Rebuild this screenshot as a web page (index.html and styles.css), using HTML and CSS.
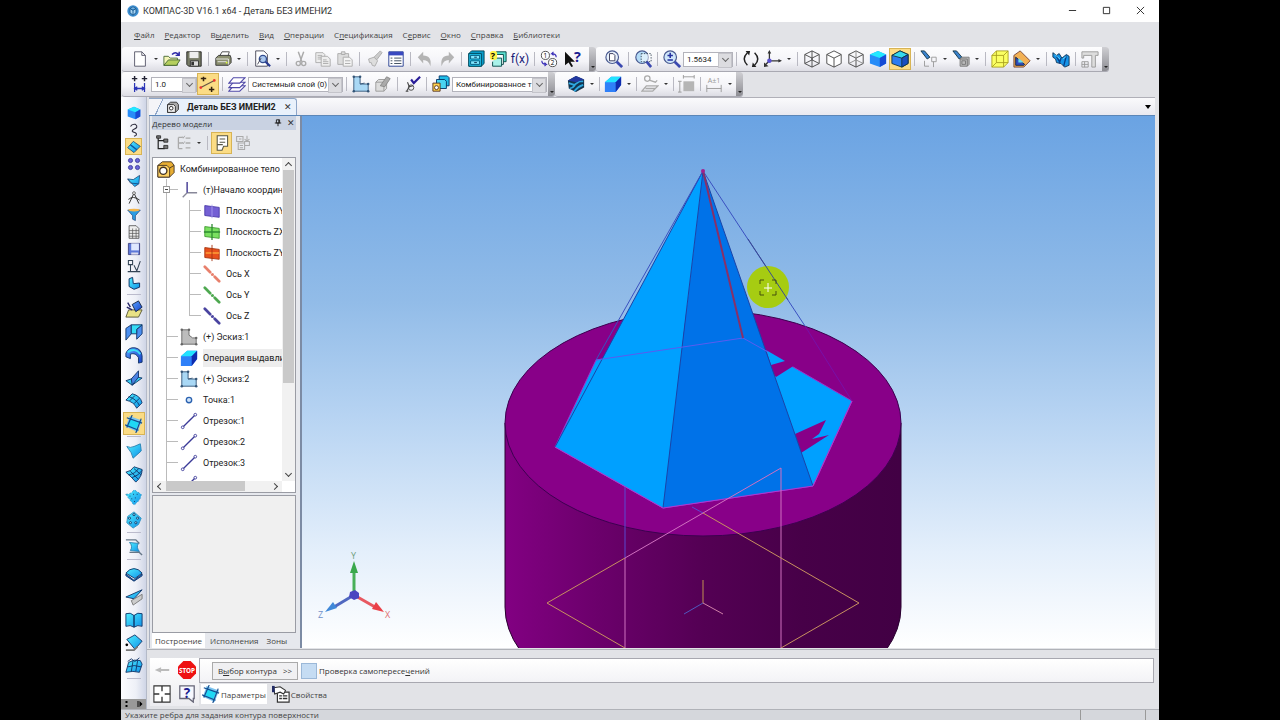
FILE: index.html
```
<!DOCTYPE html>
<html lang="ru">
  <head>
    <meta charset="UTF-8" />
    <meta name="viewport" content="width=device-width, initial-scale=1.0" />
    <title>КОМПАС-3D V16.1 x64 - Деталь БЕЗ ИМЕНИ2</title>
    <link rel="stylesheet" href="styles.css" />
  </head>
  <body>
    <!-- icon set -->
    <svg class="defs" width="0" height="0" aria-hidden="true">
      <defs>
        <linearGradient id="cy" x1="0" y1="0" x2="1" y2="1"><stop offset="0" stop-color="#4ff0ff" /><stop offset="1" stop-color="#0f8fe8" /></linearGradient>
        <linearGradient id="bl" x1="0" y1="0" x2="1" y2="1"><stop offset="0" stop-color="#5ba4ff" /><stop offset="1" stop-color="#1540c8" /></linearGradient>
      </defs>
      <symbol id="logo" viewBox="0 0 20 20"><circle cx="10" cy="10" r="9.500" fill="#3d8ed0" /><path d="M5 6l5-3 5 3v7l-5 4-5-4zM5 6l5 3 5-3M10 9v8" fill="#a8d4f2" stroke="#15578f" stroke-width="1.5" /></symbol>
      <symbol id="new" viewBox="0 0 20 20"><path d="M4 2h8l4 4v12H4z" fill="#fff" stroke="#556" /><path d="M12 2v4h4" fill="none" stroke="#556" /></symbol>
      <symbol id="open" viewBox="0 0 20 20"><path d="M1 17V7h5l2 2h8v8z" fill="#f5f5b8" stroke="#463" /><path d="M1 17l5-6h13l-4 6z" fill="#b5cf5d" stroke="#463" /><path d="M10 5q4-4 7 0M18 2v4h-4" fill="none" stroke="#2e2aa8" stroke-width="1.6" /></symbol>
      <symbol id="save" viewBox="0 0 20 20"><path d="M2 2h16v16H4l-2-2z" fill="#777b66" stroke="#222" /><path d="M5 2h10v7H5z" fill="#eee" /><path d="M6 12h9v6H6z" fill="#ddd" stroke="#333" /><path d="M7 13h3v4H7z" fill="#333" /></symbol>
      <symbol id="print" viewBox="0 0 20 20"><path d="M6 7l3-5h8l-2 6z" fill="#fff" stroke="#444" /><path d="M2 9l3-3h13l1 3v5l-3 3H2z" fill="#8c9070" stroke="#333" /><path d="M2 10h14v6M4 13h10" fill="none" stroke="#eee" /><circle cx="14" cy="14" r="1" fill="#df3" /></symbol>
      <symbol id="preview" viewBox="0 0 20 20"><path d="M3 1h9l4 4v13H3z" fill="#fff" stroke="#445" /><circle cx="11" cy="10" r="4" fill="#a9c7ee" stroke="#334d90" stroke-width="1.5" /><path d="M14 13l5 5" stroke="#283a90" stroke-width="2.5" /><path d="M5 16l4-7" stroke="#445" /></symbol>
      <symbol id="cut" viewBox="0 0 20 20"><path d="M7 2l4 11M13 2L9 13" stroke="#aaa" stroke-width="1.6" /><circle cx="7" cy="15" r="2.3" fill="none" stroke="#aaa" stroke-width="1.5" /><circle cx="13" cy="15" r="2.3" fill="none" stroke="#aaa" stroke-width="1.5" /></symbol>
      <symbol id="copy" viewBox="0 0 20 20"><g fill="#eee" stroke="#aaa"><path d="M2 3h8l2 2v9H2z" /><path d="M8 7h7l3 3v8H8z" /><path d="M4 6h5M4 8h4M4 10h4M10 11h4M10 13h6M10 15h6" /></g></symbol>
      <symbol id="paste" viewBox="0 0 20 20"><g fill="#ddd" stroke="#aaa"><path d="M2 4h12v12H2z" /><path d="M6 2h4v3H6z" /><path d="M8 8h7l3 3v7H8z" fill="#f4f4f4" /><path d="M10 12h6M10 15h6" /></g></symbol>
      <symbol id="brush" viewBox="0 0 20 20"><path d="M17 1l2 2-6 8-3-3z" fill="#ccc" stroke="#aaa" /><path d="M4 10l6-2 4 4-3 6-3-1-1-3-2 0z" fill="#ddd" stroke="#aaa" /></symbol>
      <symbol id="props" viewBox="0 0 20 20"><path d="M2 2h16v16H2z" fill="#fff" stroke="#223b8f" /><path d="M2 2h16v4H2z" fill="#3949c0" /><path d="M4 9h2M4 12h2M4 15h2M8 9h8M8 12h8M8 15h8" stroke="#345" /></symbol>
      <symbol id="undo" viewBox="0 0 20 20"><path d="M2 8l6-6v4q10 0 8 12-2-7-8-7v4z" fill="#b4b4b4" /></symbol>
      <symbol id="redo" viewBox="0 0 20 20"><path d="M18 8l-6-6v4Q2 6 4 18q2-7 8-7v4z" fill="#b4b4b4" /></symbol>
      <symbol id="lib" viewBox="0 0 20 20"><path d="M2 4l3-3h14v14l-3 3H2z" fill="#0a9ac8" stroke="#045" /><path d="M2 4h14v14H2z" fill="#21c8f5" stroke="#045" /><path d="M4 6h10v4H4zM4 12h10v4H4z" fill="#7ee7ff" stroke="#057" /><path d="M8 8h3M8 14h3" stroke="#024" /></symbol>
      <symbol id="vars" viewBox="0 0 20 20"><path d="M8 2h11v11H8z" fill="#5de0d0" stroke="#044" /><path d="M6 5h10v11H6z" fill="#fff" stroke="#044" /><path d="M8 9h6v9H4v-5" fill="#a9f2ea" stroke="#044" /><rect x="1" y="1" width="8" height="10" rx="3" fill="#fff34a" /></symbol>
      <symbol id="order" viewBox="0 0 20 20"><circle cx="6" cy="6" r="4.5" fill="#fff" stroke="#444" /><circle cx="14" cy="14" r="4.5" fill="#fff" stroke="#444" /><path d="M18 8q0-4-5-4l2-2M13 4l2 2M2 12q0 4 5 4l-2-2M7 16l-2 2" fill="none" stroke="#3b30b8" stroke-width="1.3" /></symbol>
      <symbol id="help" viewBox="0 0 20 20"><path d="M0 2v15l4-3 3 5 2-1-3-5h5z" fill="#111" /></symbol>
      <symbol id="zoompage" viewBox="0 0 20 20"><circle cx="8" cy="8" r="7" fill="#e8f1fb" stroke="#4a5a90" stroke-width="1.3" /><path d="M5 4h4l2 2v6H5z" fill="#fff" stroke="#335" /><path d="M13 13l6 6" stroke="#3b49b0" stroke-width="3" /></symbol>
      <symbol id="zoomsel" viewBox="0 0 20 20"><circle cx="9" cy="8" r="7" fill="#b5dcf7" stroke="#4a5a90" stroke-width="1.3" /><path d="M8 4h11v9H8z" fill="#ffffff88" stroke="#345" stroke-dasharray="1.5" /><path d="M14 13l5 6" stroke="#3b49b0" stroke-width="3" /></symbol>
      <symbol id="zoompm" viewBox="0 0 20 20"><circle cx="8" cy="8" r="7" fill="#cfe6fa" stroke="#4a5a90" stroke-width="1.3" /><path d="M8 3v6M5 6h6M5 11h6" stroke="#2530a0" stroke-width="1.7" /><path d="M13 13l6 6" stroke="#3b49b0" stroke-width="3" /></symbol>
      <symbol id="rotate" viewBox="0 0 20 20"><path d="M6 17Q-1 10 6 3M14 3q7 7 0 14" fill="none" stroke="#222" stroke-width="1.6" /><path d="M4 1h5l-1 5zM16 19h-5l1-5z" fill="#222" /></symbol>
      <symbol id="axes" viewBox="0 0 20 20"><path d="M6 12V2M6 12h12M6 12l-5 5" stroke="#333" stroke-width="1.4" /><path d="M4 4l2-4 2 4zM16 10l4 2-4 2zM0 14v5l5-1z" fill="#333" /><circle cx="6" cy="12" r="2.5" fill="#5a50d0" /></symbol>
      <symbol id="wire" viewBox="0 0 20 20"><path d="M10 1l8 4v10l-8 4-8-4V5zM2 5l8 4 8-4M10 9v10M10 1v10M2 15l8-4 8 4" fill="none" stroke="#444" /></symbol>
      <symbol id="hidden" viewBox="0 0 20 20"><path d="M10 1l8 4v10l-8 4-8-4V5z" fill="#fff" stroke="#444" /><path d="M2 5l8 4 8-4M10 9v10" fill="none" stroke="#444" /></symbol>
      <symbol id="thin" viewBox="0 0 20 20"><path d="M10 1l8 4v10l-8 4-8-4V5zM2 5l8 4 8-4M10 9v10" fill="none" stroke="#444" /><path d="M10 1v10M2 15l8-4 8 4" fill="none" stroke="#888" /></symbol>
      <symbol id="shade" viewBox="0 0 20 20"><path d="M1 5l9-4 9 4v10l-7 4-11-4z" fill="#278cf8" /><path d="M1 5l9-4 9 4-7 4z" fill="#23e8ff" /><path d="M12 9l7-4v10l-7 4z" fill="#174bd4" /></symbol>
      <symbol id="shadewire" viewBox="0 0 20 20"><path d="M1 6l9-5 9 4v10l-7 4-11-4z" fill="#2b7cf0" stroke="#134" /><path d="M1 6l9-5 9 4-7 4z" fill="#35d8ee" stroke="#134" /><path d="M12 9l7-4v10l-7 4z" fill="#1a4ec0" stroke="#134" /></symbol>
      <symbol id="light" viewBox="0 0 20 20"><path d="M1 1l4 0 6 7-3 2z" fill="#3a83cf" stroke="#134" /><path d="M5 12v6h5M13 8h5v5h-5zM15 13v6" fill="none" stroke="#999" /></symbol>
      <symbol id="light2" viewBox="0 0 20 20"><path d="M1 1l4 0 6 7-3 2z" fill="#3a83cf" stroke="#134" /><path d="M9 10l2-2h8v8l-2 2H9z" fill="#bbb" stroke="#777" /><path d="M9 10h8v8M11 12h4v4h-4z" fill="none" stroke="#777" /></symbol>
      <symbol id="ybox" viewBox="0 0 20 20"><path d="M1 6l5-5h13v13l-5 5H1z" fill="#fbff62" stroke="#a9a020" /><path d="M1 6h13v13M14 6l5-5M6 1v13h13M6 14l-5 5" fill="none" stroke="#a9a020" /></symbol>
      <symbol id="section" viewBox="0 0 20 20"><path d="M1 6L8 1l11 11-7 7H1z" fill="#f2b155" stroke="#743" /><path d="M3 17V8l10 8-1 1z" fill="#2e4fc0" stroke="#124" /><path d="M6 14V9l6 5z" fill="#6fe0e8" /></symbol>
      <symbol id="fish" viewBox="0 0 20 20"><path d="M1 3l4 3 3-2 3 5 5-4 3 2v10l-5 2-4-4-5-1-1-4-3-2z" fill="#1594e8" stroke="#135" /><path d="M5 7l4 7M10 9l-2 6M16 6l-3 12" stroke="#073f88" stroke-width="1.5" /><path d="M3 5l6 5M12 10l4-3" stroke="#62d8ff" /></symbol>
      <symbol id="caliper" viewBox="0 0 20 20"><path d="M1 2h18v4h-3v13h-4V6H3v3H1z" fill="#ddd" stroke="#999" /><path d="M1 13h7v6H1zM4 13v6M1 16h7" fill="none" stroke="#999" /></symbol>
      <symbol id="dims" viewBox="0 0 20 20"><path d="M4 1v6M1 4h6M15 1v6M12 4h6" stroke="#223" stroke-width="1.6" /><path d="M4 9v10M15 9v10M5 15h9M7 13l-3 2 3 2M12 13l3 2-3 2" fill="none" stroke="#2b35b8" stroke-width="1.4" /></symbol>
      <symbol id="snap" viewBox="0 0 20 20"><path d="M2 14L17 6" stroke="#654" stroke-width="1.3" /><path d="M5 2v5M2 4h6M14 13v6M11 16h6" stroke="#321" stroke-width="1.7" /><circle cx="2" cy="14" r="1.5" fill="#e33" /><circle cx="17" cy="6" r="1.5" fill="#e33" /></symbol>
      <symbol id="layers" viewBox="0 0 20 20"><g fill="#fff" stroke="#5049a8" stroke-width="1.2"><path d="M1 18l5-6h13l-6 6z" /><path d="M1 14l5-6h13l-6 6z" /><path d="M1 9l5-6h13l-6 6z" /></g></symbol>
      <symbol id="sketch" viewBox="0 0 20 20"><path d="M2 2h7v8h9v8H2z" fill="#a9d8f5" stroke="#357" /><path d="M9 10l5-1" stroke="#357" /><g fill="#357"><circle cx="2" cy="2" r="1.4" /><circle cx="9" cy="2" r="1.4" /><circle cx="18" cy="10" r="1.4" /><circle cx="18" cy="18" r="1.4" /><circle cx="2" cy="18" r="1.4" /></g></symbol>
      <symbol id="sketchg" viewBox="0 0 20 20"><path d="M2 2h8v6l4 3h4v7H2z" fill="#bdbdbd" stroke="#666" /><g fill="#666"><circle cx="2" cy="2" r="1.4" /><circle cx="10" cy="2" r="1.4" /><circle cx="18" cy="11" r="1.4" /><circle cx="18" cy="18" r="1.4" /><circle cx="2" cy="18" r="1.4" /></g></symbol>
      <symbol id="editpart" viewBox="0 0 20 20"><path d="M2 8l3-3h9v10l-3 3H2z" fill="#ddd" stroke="#999" /><path d="M2 8h9v10" fill="none" stroke="#999" /><path d="M7 12l7-10 4 2-6 9z" fill="#aaa" stroke="#888" /></symbol>
      <symbol id="check" viewBox="0 0 20 20"><path d="M4 18l3-5 4-1M7 13l-2-5M3 18h3" fill="none" stroke="#444" stroke-width="1.2" /><circle cx="9" cy="14" r="3" fill="none" stroke="#444" /><path d="M9 5l3 4 7-7" fill="none" stroke="#281c98" stroke-width="2.4" /></symbol>
      <symbol id="combo" viewBox="0 0 20 20"><path d="M8 1h9l2 2v9H8z" fill="#20bde8" stroke="#036" /><path d="M5 5h9l2 2v8H5z" fill="#49d4f2" stroke="#036" /><path d="M1 9h8v9H1z" fill="#ffd34a" stroke="#532" /><circle cx="5" cy="14" r="2.2" fill="#fff" stroke="#532" /></symbol>
      <symbol id="stripes" viewBox="0 0 20 20"><path d="M1 6l9-5 9 4v9l-9 5-8-4z" fill="#13354f" /><path d="M2 9l6 2 6-4h4M3 15q4-1 6-4M8 18q4-5 10-7" fill="none" stroke="#2fa8e0" stroke-width="2" /><path d="M1 6l9-5 9 4-9 3z" fill="#2238a0" /></symbol>
      <symbol id="extrude" viewBox="0 0 20 20"><path d="M1 8l7-6h11v9l-6 8H1z" fill="#2f80f8" /><path d="M1 8l7-6h11l-6 6z" fill="#22e3ff" /><path d="M13 8l6-6v9l-6 8z" fill="#0f2cae" /></symbol>
      <symbol id="proj" viewBox="0 0 20 20"><g fill="none" stroke="#aaa" stroke-width="1.4"><circle cx="7" cy="4" r="3" /><path d="M10 6l6 2 2-2M1 18l5-6h13l-6 6zM5 15h11" /></g></symbol>
      <symbol id="dimbox" viewBox="0 0 20 20"><path d="M6 7h12v11H6z" fill="#b5b5b5" /><path d="M2 7v12M0 7h4M0 19h4M6 2h12M6 0v4M18 0v4" stroke="#999" /></symbol>
      <symbol id="dimtext" viewBox="0 0 20 20"><path d="M2 11v8M18 11v8M2 15h16" stroke="#999" /></symbol>
      <symbol id="curve" viewBox="0 0 20 20"><path d="M5 5q2-4 7-3 5 4-2 7-6 3 2 5 4 3-2 5" fill="none" stroke="#334" stroke-width="1.6" /></symbol>
      <symbol id="surf" viewBox="0 0 20 20"><path d="M1 11L9 2l10 7-9 9z" fill="url(#cy)" stroke="#136" /><path d="M5 7l9 7" stroke="#0b55a0" stroke-width="2" /></symbol>
      <symbol id="array" viewBox="0 0 20 20"><g fill="#6c66d8" stroke="#228"><circle cx="5" cy="5" r="3" /><circle cx="15" cy="5" r="3" /><circle cx="5" cy="15" r="3" /><circle cx="15" cy="15" r="3" /></g></symbol>
      <symbol id="fold" viewBox="0 0 20 20"><path d="M1 7l8 1 9-6-1 12-6 4z" fill="url(#cy)" stroke="#136" /><path d="M1 7l4 6 11 1" fill="none" stroke="#136" /></symbol>
      <symbol id="compass" viewBox="0 0 20 20"><path d="M10 3L3 18M10 3l7 15M2 12q7-6 16 1" fill="none" stroke="#333" stroke-width="1.4" /><circle cx="10" cy="3" r="2" fill="#fff" stroke="#333" /></symbol>
      <symbol id="filter" viewBox="0 0 20 20"><path d="M1 3h18l-7 8v7l-4-2v-5z" fill="#2b9de4" stroke="#247" /><ellipse cx="10" cy="3" rx="8" ry="2" fill="#f2b44c" /></symbol>
      <symbol id="spec" viewBox="0 0 20 20"><path d="M3 1h10l4 4v14H3z" fill="#eee" stroke="#333" /><path d="M3 8h14M3 12h14M3 16h14M8 5v14M13 5v14" stroke="#555" /></symbol>
      <symbol id="report" viewBox="0 0 20 20"><path d="M2 2h16v16H2z" fill="#5d78d8" stroke="#226" /><path d="M6 2h11v10H6z" fill="#dfe8ff" /><path d="M6 15h10v3H6z" fill="#dde" /></symbol>
      <symbol id="elem" viewBox="0 0 20 20"><path d="M2 2h6v6H2zM5 8v10M1 18h18M10 9l4 8 5-14" fill="none" stroke="#345" stroke-width="1.5" /></symbol>
      <symbol id="sheet" viewBox="0 0 20 20"><path d="M3 4l5-2 1 9 9-1v6l-8 3-7-4z" fill="url(#cy)" stroke="#136" stroke-width="1.4" /></symbol>
      <symbol id="sk3d" viewBox="0 0 20 20"><path d="M1 19l3-8h15l-4 8z" fill="#e8e285" stroke="#553" /><path d="M8 5l7-4 4 7-7 5z" fill="url(#bl)" stroke="#124" /><path d="M2 8l6 3M3 3l3 5" stroke="#226" stroke-width="1.5" /></symbol>
      <symbol id="s-ext" viewBox="0 0 20 20"><path d="M1 6l6-4v10l-6 7zM13 7l6-5v10l-6 6z" fill="#4b8ff0" stroke="#136" /><path d="M7 2h12l-6 5v5H7z" fill="#35dcf5" stroke="#136" /></symbol>
      <symbol id="s-rev" viewBox="0 0 20 20"><path d="M1 8Q4 1 11 2q7 1 8 9v7l-4 1v-6q-3-6-9-4v5l-5-2z" fill="url(#bl)" stroke="#136" /><path d="M3 7q8-6 14 2" fill="none" stroke="#3be0f5" stroke-width="2" /></symbol>
      <symbol id="s-bend" viewBox="0 0 20 20"><path d="M1 13l12-4 6 1-11 8z" fill="#38cdf2" stroke="#136" /><path d="M7 11l8-9v7l-7 9z" fill="#4a80e2" stroke="#136" /></symbol>
      <symbol id="s-sweep" viewBox="0 0 20 20"><path d="M1 9l7-7q9 2 11 10l-6 6q-3-7-12-9z" fill="url(#cy)" stroke="#136" /><path d="M4 5q9 3 12 10M5 10l6-6M10 13l6-6" fill="none" stroke="#136" /></symbol>
      <symbol id="s-net" viewBox="0 0 20 20"><path d="M5 1l14 5-5 13L1 13z" fill="#7cc4f0" /><path d="M6 4l10 4-4 8-9-4z" fill="#1fd8f5" /><path d="M8 0L2 14M18 4l-6 16M2 3l17 6M0 11l15 6" stroke="#134d90" stroke-width="1.300" /></symbol>
      <symbol id="s-a" viewBox="0 0 20 20"><path d="M2 5q4 2 8 0l7-3q1 6 1 8l-9 8q-1-6-7-13z" fill="url(#cy)" stroke="#2980b0" /></symbol>
      <symbol id="s-b" viewBox="0 0 20 20"><path d="M1 8q6-1 9-6l9 3q0 8-7 14-5-6-11-11z" fill="url(#cy)" stroke="#136" /><path d="M4 11q7-1 11-7M8 14q7-2 11-8M6 7l9 9M10 4l8 7" fill="none" stroke="#136" /></symbol>
      <symbol id="s-c" viewBox="0 0 20 20"><path d="M1 7q6 0 9-5l8 5q0 6-8 12-5-6-9-12z" fill="url(#cy)" stroke="#3191c0" stroke-dasharray="2" /><path d="M5 9h1M9 7h1M13 7h1M7 12h1M11 11h1M10 15h1" stroke="#136" /></symbol>
      <symbol id="s-d" viewBox="0 0 20 20"><path d="M10 1l8 7-3 7-6 4-7-6 1-7z" fill="url(#cy)" stroke="#3191c0" /><g fill="#9ef" stroke="#136"><circle cx="10" cy="4" r="1.200" /><circle cx="5" cy="8" r="1.200" /><circle cx="14" cy="8" r="1.200" /><circle cx="6" cy="13" r="1.200" /><circle cx="12" cy="13" r="1.200" /></g></symbol>
      <symbol id="s-ruled" viewBox="0 0 20 20"><path d="M5 5l10 1q-3 4 1 9l-10-1q3-5-1-9z" fill="url(#cy)" stroke="#2980b0" /><path d="M1 2h11l4 4M5 16h11l3 3" fill="none" stroke="#678" stroke-width="1.5" /></symbol>
      <symbol id="s-off" viewBox="0 0 20 20"><path d="M1 10l9 7 9-7v2l-9 6-9-6z" fill="#1c75d0" stroke="#136" /><path d="M1 9q4-5 9-5t9 5l-8 6z" fill="url(#cy)" stroke="#136" /></symbol>
      <symbol id="s-trim" viewBox="0 0 20 20"><path d="M1 10L19 2l-9 10z" fill="url(#cy)" stroke="#136" /><path d="M7 14L19 7v5l-10 7z" fill="#ccc" stroke="#777" /></symbol>
      <symbol id="s-sew" viewBox="0 0 20 20"><path d="M1 3q5-2 9 2v13q-4-3-9-1zM10 5q4-4 9-2v14q-5-2-9 1z" fill="url(#cy)" stroke="#136" /></symbol>
      <symbol id="s-rest" viewBox="0 0 20 20"><path d="M2 6l9-5 8 7-8 9z" fill="url(#cy)" stroke="#136" /><path d="M1 18h9l4-4" stroke="#777" stroke-width="2" fill="none" /><circle cx="2" cy="12" r="1.5" /></symbol>
      <symbol id="s-fit" viewBox="0 0 20 20"><path d="M1 17L4 6q6-4 13-2l2 4-3 9q-7-2-15 0z" fill="url(#cy)" stroke="#136" /><path d="M3 11q7-3 15 0M9 4L7 16M14 4l-2 12M3 5l4-3 4 3 5-4" fill="none" stroke="#136" /></symbol>
      <symbol id="tree" viewBox="0 0 20 20"><path d="M4 1v16h8M4 7h8" fill="none" stroke="#222" stroke-width="1.5" /><path d="M2 1h5v3H2zM11 5h5v4h-5zM11 13h5v4h-5z" fill="#777" stroke="#222" /></symbol>
      <symbol id="listg" viewBox="0 0 20 20"><path d="M3 3v14M3 3h5M3 10h5M3 17h5M12 4h6M12 10h6M12 16h6" stroke="#aaa" stroke-width="1.6" /><path d="M8 2l1 2 2-3M8 9l1 2 2-3" fill="none" stroke="#999" /></symbol>
      <symbol id="doc" viewBox="0 0 20 20"><path d="M4 1h13v13h-5l-2 5H4z" fill="#fff" stroke="#554" stroke-width="1.3" /><path d="M7 5h7M7 9h7M4 12h7" stroke="#554" stroke-width="1.4" /></symbol>
      <symbol id="relg" viewBox="0 0 20 20"><path d="M2 2h8v6H2zM4 10h8v8H4zM12 8h6v5h-6zM15 1v6M12 5l3 3 3-3M5 5h3M6 13h4M6 16h4" fill="none" stroke="#aaa" stroke-width="1.3" /></symbol>
      <symbol id="part" viewBox="0 0 20 20"><path d="M1 6l5-4h10l3 4v8l-5 5H1z" fill="#e8ae33" stroke="#432" /><path d="M1 6h10l3 3v10H1z" fill="#ffd263" stroke="#432" /><circle cx="7" cy="12" r="4" fill="#fff" stroke="#432" stroke-width="1.5" /><path d="M14 9l5-3" stroke="#432" /></symbol>
      <symbol id="partg" viewBox="0 0 20 20"><path d="M1 6l5-4h10l3 4v8l-5 5H1z" fill="#aaa" stroke="#222" stroke-width="1.4" /><path d="M1 6h10l3 3v10H1z" fill="#eee" stroke="#222" stroke-width="1.4" /><circle cx="7" cy="12" r="3" fill="#fff" stroke="#222" stroke-width="1.5" /></symbol>
      <symbol id="origin" viewBox="0 0 20 20"><path d="M8 1v12l-5 5M8 13h11" fill="none" stroke="#889" stroke-width="1.5" /><path d="M8 1v12" stroke="#5a50a8" stroke-width="1.5" /></symbol>
      <symbol id="plxy" viewBox="0 0 20 20"><path d="M2 4l16 2v11L2 15z" fill="#7460d4" stroke="#4a3aa8" /><path d="M10 3v15" stroke="#a79bf0" /></symbol>
      <symbol id="plzx" viewBox="0 0 20 20"><path d="M2 4l16 2v11L2 15z" fill="#7ae060" stroke="#3f9a30" /><path d="M10 1v18M1 10h18" stroke="#2c8a30" stroke-width="1.4" /></symbol>
      <symbol id="plzy" viewBox="0 0 20 20"><path d="M2 4l16 2v11L2 15z" fill="#e8501c" stroke="#a53410" /><path d="M3 10h15" stroke="#ffa43a" stroke-width="1.6" /><path d="M10 1v18" stroke="#a53410" /></symbol>
      <symbol id="axis" viewBox="0 0 20 20"><path d="M2 2l6 6M13 13l5 5" stroke="currentColor" stroke-width="3" stroke-linecap="round" /><circle cx="10.500" cy="10.500" r="1.700" fill="currentColor" /></symbol>
      <symbol id="point" viewBox="0 0 20 20"><circle cx="10" cy="10" r="3" fill="#cfe4fa" stroke="#2b62b0" stroke-width="1.5" /></symbol>
      <symbol id="seg" viewBox="0 0 20 20"><path d="M3 17L17 3" stroke="#3b3a98" stroke-width="1.5" /><circle cx="3" cy="17" r="1.5" fill="#fff" stroke="#3b3a98" /><circle cx="17" cy="3" r="1.500" fill="#fff" stroke="#3b3a98" /></symbol>
      <symbol id="pin" viewBox="0 0 10 10"><path d="M3 1h4v4H3zM1 5h8M5 5v4M6 1v4" fill="none" stroke="#222" stroke-width="1.200" /></symbol>
      <symbol id="left" viewBox="0 0 20 20"><path d="M2 10l7-3v2h9v2H9v2z" fill="#bbb" /></symbol>
      <symbol id="stop" viewBox="0 0 20 20"><path d="M6 0h8l6 6v8l-6 6H6l-6-6V6z" fill="#ee1212" /></symbol>
      <symbol id="frame" viewBox="0 0 20 20"><path d="M1 1h18v18H1z" fill="#fff" stroke="#333" stroke-width="1.200" /><path d="M10 1v6M10 13v6M1 10h6M13 10h6" stroke="#333" stroke-width="1.500" /></symbol>
      <symbol id="what" viewBox="0 0 20 20"><path d="M2 1h16v14h-1v4l-5-4H2z" fill="#f6f8ff" stroke="#667" stroke-width="1.400" /></symbol>
      <symbol id="hand" viewBox="0 0 20 20"><path d="M6 8h13v11H6z" fill="#fff" stroke="#333" stroke-width="1.300" /><path d="M8 12h3M8 15h3M12 12h5M12 15h5" stroke="#333" stroke-width="1.400" /><path d="M2 3l7-1 6 4-2 4-4-2-6 2z" fill="#fff" stroke="#333" stroke-width="1.200" /><path d="M0 1h3v7H0z" fill="#222c66" /></symbol>
    </svg>

    <div class="app">
      <header class="titlebar">
        <svg class="logo"><use href="#logo" /></svg>
        <h1>КОМПАС-3D V16.1 x64 - Деталь БЕЗ ИМЕНИ2</h1>
        <div class="win-btns">
          <button aria-label="Свернуть"><svg viewBox="0 0 10 10"><path d="M1 5h8" stroke="#222" /></svg></button>
          <button aria-label="Развернуть"><svg viewBox="0 0 10 10"><path d="M1.500 1.500h7v7h-7z" fill="none" stroke="#222" /></svg></button>
          <button aria-label="Закрыть"><svg viewBox="0 0 10 10"><path d="M1 1l8 8M9 1l-8 8" stroke="#222" /></svg></button>
        </div>
      </header>

      <nav class="menu">
        <a href="#"><u>Ф</u>айл</a>
        <a href="#"><u>Р</u>едактор</a>
        <a href="#">В<u>ы</u>делить</a>
        <a href="#"><u>В</u>ид</a>
        <a href="#"><u>О</u>перации</a>
        <a href="#">С<u>п</u>ецификация</a>
        <a href="#">С<u>е</u>рвис</a>
        <a href="#"><u>О</u>кно</a>
        <a href="#"><u>С</u>правка</a>
        <a href="#"><u>Б</u>иблиотеки</a>
      </nav>

      <div class="toolrow">
        <div class="toolbar">
          <button class="tb" aria-label="Создать"><svg><use href="#new" /></svg></button><button class="caret" aria-label="Ещё"></button>
          <button class="tb" aria-label="Открыть"><svg><use href="#open" /></svg></button>
          <button class="tb" aria-label="Сохранить"><svg><use href="#save" /></svg></button>
          <i class="sep"></i>
          <button class="tb" aria-label="Печать"><svg><use href="#print" /></svg></button><button class="caret" aria-label="Ещё"></button>
          <i class="sep"></i>
          <button class="tb" aria-label="Просмотр"><svg><use href="#preview" /></svg></button><button class="caret" aria-label="Ещё"></button>
          <i class="sep"></i>
          <button class="tb" aria-label="Вырезать"><svg><use href="#cut" /></svg></button>
          <button class="tb" aria-label="Копировать"><svg><use href="#copy" /></svg></button>
          <button class="tb" aria-label="Вставить"><svg><use href="#paste" /></svg></button>
          <i class="sep"></i>
          <button class="tb" aria-label="Копировать свойства"><svg><use href="#brush" /></svg></button>
          <button class="tb" aria-label="Свойства"><svg><use href="#props" /></svg></button>
          <i class="sep"></i>
          <button class="tb" aria-label="Отменить"><svg><use href="#undo" /></svg></button>
          <button class="tb" aria-label="Повторить"><svg><use href="#redo" /></svg></button>
          <i class="sep"></i>
          <button class="tb" aria-label="Менеджер библиотек"><svg><use href="#lib" /></svg></button>
          <button class="tb" aria-label="Менеджер документа"><svg viewBox="0 0 20 20"><use href="#vars" /><text x="2" y="10" class="t-q">?</text></svg></button>
          <button class="tb fx" aria-label="Переменные">f(x)</button>
          <i class="sep"></i>
          <button class="tb" aria-label="Порядок"><svg viewBox="0 0 20 20"><use href="#order" /><text x="4" y="9" class="t-n">1</text><text x="12" y="17" class="t-n">2</text></svg></button>
          <button class="tb wide" aria-label="Что это такое?"><svg viewBox="0 0 20 20"><use href="#help" /><text x="10" y="13" class="t-help">?</text></svg></button>
          <i class="grip"></i>
        </div>
        <div class="toolbar">
          <button class="tb" aria-label="Показать все"><svg><use href="#zoompage" /></svg></button>
          <i class="sep"></i>
          <button class="tb" aria-label="Увеличить рамкой"><svg><use href="#zoomsel" /></svg></button>
          <i class="sep"></i>
          <button class="tb" aria-label="Масштаб"><svg><use href="#zoompm" /></svg></button>
          <span class="combo small"><select aria-label="Текущий масштаб"><option>1.5634</option></select></span>
          <i class="sep"></i>
          <button class="tb" aria-label="Повернуть"><svg><use href="#rotate" /></svg></button>
          <button class="tb" aria-label="Ориентация"><svg><use href="#axes" /></svg></button><button class="caret" aria-label="Ещё"></button>
          <i class="sep"></i>
          <button class="tb" aria-label="Каркас"><svg><use href="#wire" /></svg></button>
          <button class="tb" aria-label="Без невидимых линий"><svg><use href="#hidden" /></svg></button>
          <button class="tb" aria-label="Невидимые линии тонкие"><svg><use href="#thin" /></svg></button>
          <button class="tb" aria-label="Полутоновое"><svg><use href="#shade" /></svg></button>
          <button class="tb on" aria-label="Полутоновое с каркасом"><svg><use href="#shadewire" /></svg></button>
          <i class="sep"></i>
          <button class="tb" aria-label="Скрыть"><svg><use href="#light" /></svg></button><button class="caret" aria-label="Ещё"></button>
          <button class="tb" aria-label="Скрыть тела"><svg><use href="#light2" /></svg></button><button class="caret" aria-label="Ещё"></button>
          <i class="sep"></i>
          <button class="tb" aria-label="Габарит"><svg><use href="#ybox" /></svg></button>
          <button class="tb" aria-label="Сечение"><svg><use href="#section" /></svg></button><button class="caret" aria-label="Ещё"></button>
          <i class="sep"></i>
          <button class="tb" aria-label="Перестроить"><svg><use href="#fish" /></svg></button>
          <i class="sep"></i>
          <button class="tb" aria-label="Измерить"><svg><use href="#caliper" /></svg></button>
          <i class="grip"></i>
        </div>
      </div>

      <div class="toolrow">
        <div class="toolbar">
          <button class="tb" aria-label="Шаг курсора"><svg><use href="#dims" /></svg></button>
          <span class="combo step"><select aria-label="Шаг"><option>1.0</option></select></span>
          <button class="tb on" aria-label="Привязки"><svg><use href="#snap" /></svg></button>
          <i class="sep"></i>
          <button class="tb" aria-label="Слои"><svg><use href="#layers" /></svg></button>
          <span class="combo"><select aria-label="Слой"><option>Системный слой (0)</option></select></span>
          <i class="sep"></i>
          <button class="tb" aria-label="Эскиз"><svg><use href="#sketch" /></svg></button>
          <button class="tb" aria-label="Редактировать деталь"><svg><use href="#editpart" /></svg></button>
          <i class="sep"></i>
          <button class="tb" aria-label="Проверка"><svg><use href="#check" /></svg></button>
          <i class="sep"></i>
          <button class="tb" aria-label="Исполнение"><svg><use href="#combo" /></svg></button>
          <span class="combo"><select aria-label="Исполнение"><option>Комбинированное т</option></select></span>
          <i class="grip"></i>
        </div>
        <div class="toolbar second">
          <button class="tb" aria-label="Зебра"><svg><use href="#stripes" /></svg></button><button class="caret" aria-label="Ещё"></button>
          <i class="sep"></i>
          <button class="tb" aria-label="Выдавливание"><svg><use href="#extrude" /></svg></button><button class="caret" aria-label="Ещё"></button>
          <i class="sep"></i>
          <button class="tb" aria-label="Проекция"><svg><use href="#proj" /></svg></button><button class="caret" aria-label="Ещё"></button>
          <i class="sep"></i>
          <button class="tb" aria-label="Размеры"><svg><use href="#dimbox" /></svg></button>
          <i class="sep"></i>
          <button class="tb" aria-label="Допуск"><svg viewBox="0 0 20 20"><use href="#dimtext" /><text x="3" y="9" class="t-dim">A±1</text></svg></button><button class="caret" aria-label="Ещё"></button>
          <i class="grip"></i>
        </div>
      </div>

      <main class="work">
        <aside class="side">
          <div class="compact">
            <button aria-label="Деталь"><svg><use href="#shade" /></svg></button>
            <button aria-label="Кривые"><svg><use href="#curve" /></svg></button>
            <button class="on" aria-label="Поверхности"><svg><use href="#surf" /></svg></button>
            <button aria-label="Массивы"><svg><use href="#array" /></svg></button>
            <button aria-label="Вспомогательная геометрия"><svg><use href="#fold" /></svg></button>
            <button aria-label="Измерения"><svg><use href="#compass" /></svg></button>
            <button aria-label="Фильтры"><svg><use href="#filter" /></svg></button>
            <button aria-label="Спецификация"><svg><use href="#spec" /></svg></button>
            <button aria-label="Отчёты"><svg><use href="#report" /></svg></button>
            <button aria-label="Оформление"><svg><use href="#elem" /></svg></button>
            <button aria-label="Листовое тело"><svg><use href="#sheet" /></svg></button>
          </div>
          <div class="tools">
            <button aria-label="Импорт"><svg><use href="#sk3d" /></svg></button>
            <button aria-label="Поверхность выдавливания"><svg><use href="#s-ext" /></svg></button>
            <button aria-label="Поверхность вращения"><svg><use href="#s-rev" /></svg></button>
            <button aria-label="Кинематическая"><svg><use href="#s-bend" /></svg></button>
            <button aria-label="По сечениям"><svg><use href="#s-sweep" /></svg></button>
            <button class="on" aria-label="Заплатка"><svg><use href="#s-net" /></svg></button>
          </div>
          <div class="tools">
            <button aria-label="По сети кривых"><svg><use href="#s-a" /></svg></button>
            <button aria-label="По сети точек"><svg><use href="#s-b" /></svg></button>
            <button aria-label="По пласту точек"><svg><use href="#s-c" /></svg></button>
            <button aria-label="По облаку точек"><svg><use href="#s-d" /></svg></button>
          </div>
          <div class="tools">
            <button aria-label="Линейчатая"><svg><use href="#s-ruled" /></svg></button>
          </div>
          <div class="tools">
            <button aria-label="Эквидистанта"><svg><use href="#s-off" /></svg></button>
            <button aria-label="Усечение"><svg><use href="#s-trim" /></svg></button>
            <button aria-label="Сшивка"><svg><use href="#s-sew" /></svg></button>
            <button aria-label="Продление"><svg><use href="#s-rest" /></svg></button>
            <button aria-label="Восстановление"><svg><use href="#s-fit" /></svg></button>
          </div>
          <div class="side-grip">
            <svg viewBox="0 0 20 10"><path d="M2 2h2v2H2zM2 6h2v2H2zM14 2h1v6h-1zM16 2l3 3-3 3z" /></svg>
          </div>
        </aside>

        <div class="center">
          <div class="doc">
            <div class="doc-tabs">
              <div class="doc-tab">
                <svg><use href="#partg" /></svg>
                <b>Деталь БЕЗ ИМЕНИ2</b>
                <button aria-label="Закрыть вкладку">✕</button>
              </div>
              <button class="tab-list" aria-label="Список вкладок"></button>
            </div>

            <div class="split">
              <section class="panel">
                <div class="panel-head">
                  <h2>Дерево модели</h2>
                  <button aria-label="Закрепить"><svg><use href="#pin" /></svg></button>
                  <button aria-label="Закрыть панель">✕</button>
                </div>
                <div class="panel-tools">
                  <button class="tb" aria-label="Структура"><svg><use href="#tree" /></svg></button>
                  <button class="tb" aria-label="Состав"><svg><use href="#listg" /></svg></button><button class="caret" aria-label="Ещё"></button>
                  <i class="sep"></i>
                  <button class="tb on" aria-label="Последовательность"><svg><use href="#doc" /></svg></button>
                  <button class="tb" aria-label="Отношения"><svg><use href="#relg" /></svg></button>
                </div>
                <div class="tree">
                  <div class="tree-view">
                    <div class="row root"><svg><use href="#part" /></svg><span>Комбинированное тело</span></div>
                    <ul>
                      <li>
                        <div class="row"><button class="toggle" aria-label="Свернуть ветвь"></button><svg><use href="#origin" /></svg><span>(т)Начало координат</span></div>
                        <ul class="last">
                          <li class="row"><svg><use href="#plxy" /></svg><span>Плоскость XY</span></li>
                          <li class="row"><svg><use href="#plzx" /></svg><span>Плоскость ZX</span></li>
                          <li class="row"><svg><use href="#plzy" /></svg><span>Плоскость ZY</span></li>
                          <li class="row"><svg class="ax-x"><use href="#axis" /></svg><span>Ось X</span></li>
                          <li class="row"><svg class="ax-y"><use href="#axis" /></svg><span>Ось Y</span></li>
                          <li class="row"><svg class="ax-z"><use href="#axis" /></svg><span>Ось Z</span></li>
                        </ul>
                      </li>
                      <li class="row"><svg><use href="#sketchg" /></svg><span>(+) Эскиз:1</span></li>
                      <li class="row"><svg><use href="#extrude" /></svg><span class="current">Операция выдавливания:1</span></li>
                      <li class="row"><svg><use href="#sketch" /></svg><span>(+) Эскиз:2</span></li>
                      <li class="row"><svg><use href="#point" /></svg><span>Точка:1</span></li>
                      <li class="row"><svg><use href="#seg" /></svg><span>Отрезок:1</span></li>
                      <li class="row"><svg><use href="#seg" /></svg><span>Отрезок:2</span></li>
                      <li class="row"><svg><use href="#seg" /></svg><span>Отрезок:3</span></li>
                      <li class="row"><svg><use href="#seg" /></svg></li>
                    </ul>
                  </div>
                  <div class="vbar"><i class="up"></i><i class="thumb"></i><i class="down"></i></div>
                  <div class="hbar"><i class="prev"></i><i class="thumb"></i><i class="next"></i></div>
                </div>
                <div class="empty"></div>
                <div class="panel-tabs">
                  <button class="sel">Построение</button>
                  <button>Исполнения</button>
                  <button>Зоны</button>
                </div>
              </section>

              <section class="scene">
                <svg viewBox="302 116 853 532" preserveAspectRatio="xMidYMid slice">
                  <defs>
                    <linearGradient id="side" x1="0" x2="1" y1="0" y2="0">
                      <stop offset="0" stop-color="#820082" />
                      <stop offset="0.250" stop-color="#6a006a" />
                      <stop offset="0.500" stop-color="#540054" />
                      <stop offset="0.750" stop-color="#470048" />
                      <stop offset="1" stop-color="#420044" />
                    </linearGradient>
                  </defs>
                  <!-- cylinder -->
                  <path d="M505 423V607A198 113 0 0 0 901 607V423z" fill="url(#side)" stroke="#2a0030" />
                  <ellipse cx="703" cy="423" rx="198" ry="113" fill="#880088" stroke="#3c0050" />
                  <!-- pyramid base -->
                  <path d="M596 360L743 338L852 401L813 486L663 508L555 447z" fill="#00a0ff" stroke="#a030c8" />
                  <path d="M743 338L767 351L785 361L795 365L776 377zM795 434L826 420L819 434L812 439L829 435L801 453z" fill="#880088" />
                  <path d="M766 350L785 361L771 365z" fill="#00a0ff" />
                  <!-- pyramid faces -->
                  <path d="M703 171L555 447L663 508z" fill="#00a0ff" />
                  <path d="M703 171L663 508L813 486z" fill="#0072e8" />
                  <g fill="none" stroke="#1a44a8">
                    <path d="M555 447L703 171L663 508M703 171L813 486" />
                    <path d="M703 171L596 360M703 171L805 326" stroke="#3a50c0" />
                    <path d="M805 326L852 401" stroke="#7810a8" />
                  </g>
                  <path d="M596 360L743 338L768 352" fill="none" stroke="#5a5cf0" />
                  <path d="M555 447L663 508L813 486L852 401" fill="none" stroke="#b038d0" />
                  <path d="M703 171L743 338" stroke="#883068" stroke-width="2" />
                  <circle cx="703" cy="171" r="2" fill="#a02090" />
                  <!-- base planes -->
                  <g fill="none">
                    <path d="M625 487V558M692 507L703 513" stroke="#5a48d0" />
                    <path d="M625 648V558L781 468V648" stroke="#d070c0" />
                    <path d="M625 558L547 603L625 648M703 513L859 603L781 648" stroke="#c89060" />
                    <path d="M703 603V580" stroke="#c09050" />
                    <path d="M703 603L723 614" stroke="#d080a8" />
                    <path d="M703 603L684 614" stroke="#5058c0" />
                  </g>
                  <!-- cursor -->
                  <circle cx="768" cy="287" r="21" fill="#a6cc12" />
                  <path d="M748 239L788 300" stroke="#3a4c90" />
                  <path d="M760 284V280H764M772 280H776V284M776 291V295H772M764 295H760V291" fill="none" stroke="#44500c" />
                  <path d="M768 283V292M764 288H772" stroke="#fff" />
                  <!-- axis triad -->
                  <g stroke-width="3">
                    <path d="M354 595V572" stroke="#48b058" />
                    <path d="M354 595L375 607" stroke="#e85860" />
                    <path d="M354 595L334 607" stroke="#5068c0" />
                  </g>
                  <path d="M354 561L358 573H350z" fill="#3aa84c" />
                  <path d="M384 612L372 609L376 602z" fill="#ea4048" />
                  <path d="M325 612L333 602L337 608z" fill="#4088d8" />
                  <path d="M350 592L355 590L359 593V598L354 600L349 597z" fill="#4a44c0" />
                  <text x="351" y="559" class="t-axis" fill="#70a080">Y</text>
                  <text x="385" y="618" class="t-axis" fill="#e07070">X</text>
                  <text x="318" y="618" class="t-axis" fill="#7090c8">Z</text>
                </svg>
              </section>
            </div>
          </div>

          <div class="prop">
            <div class="prop-ctl">
              <button aria-label="Предыдущий"><svg><use href="#left" /></svg></button>
              <button aria-label="Стоп"><svg viewBox="0 0 20 20"><use href="#stop" /><text x="10" y="13" class="t-stop">STOP</text></svg></button>
              <button aria-label="Автосоздание"><svg><use href="#frame" /></svg></button>
              <button aria-label="Справка"><svg viewBox="0 0 20 20"><use href="#what" /><text x="10" y="14" class="t-what">?</text></svg></button>
            </div>
            <div class="prop-main">
              <div class="prop-strip">
                <button class="pick">В<u>ы</u>бор контура <span>&gt;&gt;</span></button>
                <input type="checkbox" id="selfcheck" />
                <label for="selfcheck">Проверка самопересе<u>ч</u>ений</label>
              </div>
              <div class="prop-tabs">
                <button class="sel"><svg><use href="#s-net" /></svg>Параметры</button>
                <button><svg><use href="#hand" /></svg>Свойства</button>
              </div>
            </div>
          </div>
        </div>
      </main>

      <footer class="status">
        <span>Укажите ребра для задания контура поверхности</span>
        <i></i>
        <i></i>
      </footer>
    </div>
  </body>
</html>
```
FILE: styles.css
```
* {
  box-sizing: border-box;
}

body {
  margin: 0;
  padding: 0 121px;
  background-color: #000;
  font-family: Roboto, "Open Sans", sans-serif;
  font-size: 9px;
  color: #333;
}

button {
  padding: 0;
  border: none;
  background: none;
  font: inherit;
  color: inherit;
}

a {
  color: inherit;
  text-decoration: none;
}

.defs {
  position: absolute;
}

.app {
  height: 100vh;
  display: flex;
  flex-direction: column;
  background-color: #e2e3e7;
  overflow: hidden;
}

/* title and menu */
.titlebar {
  flex: none;
  height: 22px;
  display: flex;
  align-items: center;
  gap: 4px;
  padding: 0 2px 0 6px;
  background-color: #fff;
}

.titlebar h1 {
  margin: 0;
  font-size: 9px;
  font-weight: normal;
  flex: 1;
}

.logo {
  width: 12px;
  height: 12px;
}

.win-btns {
  display: flex;
}

.win-btns button {
  width: 34px;
  height: 22px;
}

.win-btns svg {
  width: 9px;
  height: 9px;
}

.menu {
  flex: none;
  height: 24px;
  display: flex;
  align-items: center;
  gap: 10px;
  padding-left: 13px;
  font-family: "Open Sans", sans-serif;
  font-size: 8px;
  color: #444;
}

/* toolbars */
.toolrow {
  flex: none;
  height: 26px;
  display: flex;
  align-items: flex-end;
  padding-left: 1px;
}

.toolrow + .toolrow {
  height: 25px;
}

.toolbar {
  height: 25px;
  display: flex;
  align-items: center;
  padding-left: 7px;
  background: linear-gradient(#fdfdfe, #f4f4f8 60%, #dddde4);
  border-bottom: 1px solid #a9a9b2;
  border-radius: 3px;
}

.toolbar.second {
  padding-left: 10px;
}

.tb {
  flex: none;
  width: 22px;
  height: 22px;
  display: grid;
  place-items: center;
}

.tb svg {
  width: 18px;
  height: 18px;
}

.tb.wide {
  width: 28px;
}

.tb.fx {
  font-size: 12px;
  line-height: 22px;
  color: #1b1d78;
}

.on {
  background-color: #fbdc85;
  outline: 1px solid #d8b455;
  outline-offset: -1px;
}

.caret {
  flex: none;
  width: 10px;
  height: 22px;
  display: grid;
  place-items: center;
}

.caret::before {
  content: "";
  border: 2px solid transparent;
  border-top-color: #333;
  border-bottom: none;
}

.sep {
  flex: none;
  width: 1px;
  height: 14px;
  margin: 0 3px;
  background-color: #b9b9c2;
}

.second .sep {
  margin: 0 2px;
}

.grip {
  align-self: stretch;
  width: 7px;
  margin-left: 1px;
  display: flex;
  align-items: flex-end;
  justify-content: center;
  padding-bottom: 3px;
  background: linear-gradient(#cfcfd3, #8d8d93);
  border-radius: 0 3px 3px 0;
}

.grip::before {
  content: "";
  border: 2px solid transparent;
  border-top-color: #222;
  border-bottom: none;
}

.combo {
  position: relative;
  width: 95px;
  height: 15px;
  background-color: #fff;
  border: 1px solid #b3b3bb;
}

.combo.small {
  width: 50px;
}

.combo.step {
  width: 46px;
}

.combo select {
  appearance: none;
  width: 100%;
  height: 13px;
  padding: 0 12px 0 3px;
  border: none;
  background: none;
  font-family: Roboto, "Open Sans", sans-serif;
  font-size: 8px;
  color: #222;
}

.combo::before {
  content: "";
  position: absolute;
  top: 0;
  right: 0;
  width: 12px;
  height: 13px;
  background-color: #dcdce0;
  border: 1px solid #c4c4ca;
}

.combo::after {
  content: "";
  position: absolute;
  top: 3px;
  right: 4px;
  width: 4px;
  height: 4px;
  border: solid #666;
  border-width: 0 1px 1px 0;
  transform: rotate(45deg);
}

/* side bar */
.work {
  flex: 1;
  min-height: 0;
  display: flex;
}

.side {
  flex: none;
  width: 26px;
  display: flex;
  flex-direction: column;
  align-items: center;
  padding-top: 7px;
  background: linear-gradient(90deg, #fdfdff, #eef0f7 60%, #cfd5e6);
  border-right: 1px solid #b4bac8;
}

.compact,
.tools {
  width: 14px;
  display: flex;
  flex-direction: column;
  align-items: center;
  border-bottom: 1px solid #bbc;
}

.compact {
  padding-bottom: 3px;
}

.tools {
  padding: 2px 0 1px;
}

.side button {
  display: grid;
  place-items: center;
}

.compact button {
  width: 17px;
  height: 17px;
}

.compact svg {
  width: 14px;
  height: 14px;
}

.tools button {
  width: 22px;
  height: 23px;
}

.tools svg {
  width: 18px;
  height: 18px;
}

.side-grip {
  align-self: stretch;
  margin-top: auto;
  height: 10px;
  background-color: #999;
}

.side-grip svg {
  display: block;
  width: 100%;
  height: 10px;
}

/* document area */
.center {
  flex: 1;
  min-width: 0;
  display: flex;
  flex-direction: column;
}

.doc {
  flex: 1;
  min-height: 0;
  display: flex;
  flex-direction: column;
  margin: 0 4px 1px 2px;
}

.doc-tabs {
  flex: none;
  height: 19px;
  display: flex;
  justify-content: space-between;
  align-items: flex-end;
  background: linear-gradient(#fafafc, #e9e9f0);
  border-top: 1px solid #b0b0b8;
  border-bottom: 1px solid #5b86b8;
}

.doc-tab {
  height: 17px;
  width: 148px;
  display: flex;
  align-items: center;
  gap: 8px;
  padding: 0 5px 0 18px;
  background: linear-gradient(115deg, #f4f4f8 12px, #8fa6c8 12px, #8fa6c8 13px, #e9f1fb 13px);
  border: 1px solid #8fa6c8;
  border-width: 1px 1px 0 0;
  border-radius: 0 3px 0 0;
  white-space: nowrap;
}

.doc-tab svg {
  flex: none;
  width: 12px;
  height: 12px;
}

.doc-tab b {
  flex: 1;
  color: #222;
}

.tab-list {
  width: 14px;
  height: 16px;
  display: grid;
  place-items: center;
}

.tab-list::before {
  content: "";
  border: 3px solid transparent;
  border-top: 4px solid #000;
  border-bottom: none;
}

.split {
  flex: 1;
  min-height: 0;
  display: flex;
}

.panel {
  flex: none;
  width: 153px;
  display: flex;
  flex-direction: column;
  padding: 0 4px 0 2px;
  border-right: 2px solid #7c8ba4;
  border-left: 1px solid #a8b0c0;
  background-color: #e6e8ed;
}

.panel-head {
  flex: none;
  height: 14px;
  display: flex;
  align-items: center;
  gap: 5px;
  padding-right: 1px;
  background-color: #c9d2e2;
}

.panel-head h2 {
  flex: 1;
  margin: 0;
  font-family: "Open Sans", sans-serif;
  font-size: 8px;
  font-weight: normal;
}

.panel-head svg {
  display: block;
  width: 8px;
  height: 8px;
}

.panel-tools {
  flex: none;
  height: 27px;
  display: flex;
  align-items: flex-start;
  padding-top: 2px;
}

.panel-tools .tb {
  width: 21px;
}

.panel-tools .sep {
  margin-top: 4px;
}

.panel-tools .tb svg {
  width: 16px;
  height: 16px;
}

/* model tree */
.tree {
  flex: 1;
  min-height: 0;
  display: grid;
  grid-template: minmax(0, 1fr) 11px / minmax(0, 1fr) 13px;
  border: 1px solid #9a9ca4;
  background-color: #fff;
}

.tree-view {
  overflow: hidden;
}

.tree ul {
  margin: 0 0 0 13px;
  padding: 0;
  list-style: none;
  background: linear-gradient(#bbb, #bbb) no-repeat 0 0 / 1px 100%;
}

.tree ul ul {
  margin-left: 23px;
}

.tree .last {
  background-size: 1px calc(100% - 10px);
}

.row {
  height: 21px;
  display: flex;
  align-items: center;
  white-space: nowrap;
  color: #222;
}

.row::before {
  content: "";
  flex: none;
  width: 12px;
  margin-right: 2px;
  border-top: 1px solid #bbb;
}

.row.root::before {
  display: none;
}

.row.root {
  padding-left: 4px;
}

.row svg {
  flex: none;
  width: 18px;
  height: 18px;
  margin-right: 5px;
}

.row .current {
  padding: 4px 0;
  background-color: #ededed;
}

.toggle {
  position: absolute;
  display: grid;
  place-items: center;
  width: 7px;
  height: 7px;
  margin-left: -3px;
  border: 1px solid #999;
  background-color: #fff;
}

.toggle::before {
  content: "";
  width: 3px;
  border-top: 1px solid #444;
}

.ax-x {
  color: #e8806c;
}

.ax-y {
  color: #4ea850;
}

.ax-z {
  color: #4a44a0;
}

.vbar,
.hbar {
  display: flex;
  align-items: center;
  background-color: #f1f1f1;
}

.vbar {
  flex-direction: column;
  padding: 5px 0;
}

.hbar {
  padding: 0 5px;
  grid-column: 1;
}

.thumb {
  background-color: #c9c9c9;
}

.vbar .thumb {
  width: 11px;
  height: 68%;
  margin: 2px 0 auto;
}

.hbar .thumb {
  width: 66%;
  height: 10px;
  margin: 0 auto 0 3px;
}

.up,
.down,
.prev,
.next {
  width: 5px;
  height: 5px;
  border: solid #444;
  border-width: 1px 0 0 1px;
}

.up {
  transform: rotate(45deg);
}

.down {
  transform: rotate(225deg);
}

.prev {
  transform: rotate(315deg);
}

.next {
  transform: rotate(135deg);
}

.empty {
  flex: none;
  height: 26%;
  margin-top: 2px;
  background-color: #f0f0f0;
  border: 1px solid #9a9ca4;
}

.panel-tabs {
  flex: none;
  height: 15px;
  display: flex;
  gap: 2px;
  font-family: "Open Sans", sans-serif;
  font-size: 8px;
  color: #444;
}

.panel-tabs button {
  padding: 0 3px;
}

.panel-tabs .sel {
  background-color: #fff;
}

.scene {
  flex: 1;
  min-width: 0;
  background: linear-gradient(#6aa3e3, #92bce8 35%, #b6d3f2 56%, #e4effb 82%, #fff);
}

.scene svg {
  display: block;
  width: 100%;
  height: 100%;
}

/* property panel */
.prop {
  flex: none;
  height: 60px;
  display: flex;
  padding: 8px 5px 3px 3px;
  border-top: 1px solid #b0b2b8;
  font-family: "Open Sans", sans-serif;
  font-size: 8px;
}

.prop-ctl {
  flex: none;
  width: 49px;
  display: grid;
  grid-template-columns: 1fr 1fr;
  place-items: center;
  background: linear-gradient(#fff, #ececf0);
}

.prop-ctl svg {
  display: block;
  width: 18px;
  height: 18px;
}

.prop-main {
  flex: 1;
  min-width: 0;
}

.prop-strip {
  height: 25px;
  display: flex;
  align-items: center;
  padding-left: 12px;
  background: linear-gradient(#fff, #f3f3f6);
  border: 1px solid #a8a8b0;
}

.pick {
  height: 18px;
  width: 86px;
  border: 1px solid #aaa;
  background-color: #f0f0f2;
  white-space: nowrap;
}

.pick span {
  margin-left: 4px;
}

.prop-strip input {
  appearance: none;
  width: 16px;
  height: 16px;
  margin: 0 2px 0 3px;
  background-color: #c5dcf3;
  border: 1px solid #9bb8d8;
}

.prop-tabs {
  display: flex;
  gap: 4px;
  padding: 1px 0 0 2px;
  color: #444;
}

.prop-tabs button {
  height: 20px;
  display: flex;
  align-items: center;
  gap: 1px;
  padding: 0 1px;
}

.prop-tabs .sel {
  background-color: #fff;
}

.prop-tabs svg {
  width: 18px;
  height: 18px;
}

.status {
  flex: none;
  height: 11px;
  display: flex;
  gap: 64px;
  padding: 0 13px 0 4px;
  border-top: 1px solid #b0b2b8;
  background-color: #d5d7dc;
  font-family: "Open Sans", sans-serif;
  font-size: 8px;
  line-height: 10px;
  color: #444;
}

.status span {
  flex: 1;
}

.status i {
  width: 1px;
  background-color: #999;
}

/* lettering inside icons */
.t-q {
  font: bold 10px "Open Sans", sans-serif;
}

.t-n {
  font: 7px "Open Sans", sans-serif;
}

.t-help {
  font: bold 16px "Open Sans", sans-serif;
  fill: #1b1d90;
}

.t-dim {
  font: 8px "Open Sans", sans-serif;
  fill: #999;
}

.t-stop {
  font: bold 7px "Open Sans", sans-serif;
  fill: #fff;
  text-anchor: middle;
}

.t-what {
  font: bold 15px "Open Sans", sans-serif;
  fill: #1b1d90;
  text-anchor: middle;
}

.t-axis {
  font: 9px "Open Sans", sans-serif;
}
```
